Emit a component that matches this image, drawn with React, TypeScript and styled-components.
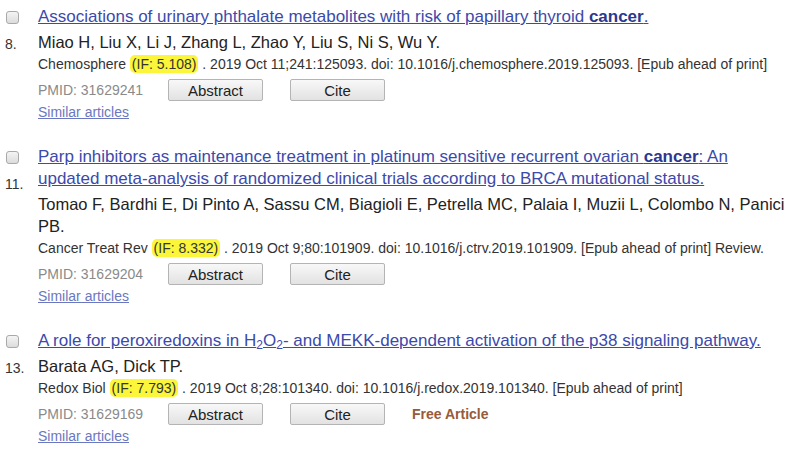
import React from 'react';
import styled, { createGlobalStyle } from 'styled-components';

const GlobalStyle = createGlobalStyle`
  html, body {
    margin: 0;
    padding: 0;
    background: #ffffff;
  }
  body {
    font-family: Arial, "Liberation Sans", sans-serif;
    color: #222;
  }
`;

type Article = {
  num: number;
  title: React.ReactNode;
  authors: React.ReactNode;
  journal: string;
  impact: string;
  citation: string;
  pmid: string;
  free?: boolean;
};

const articles: Article[] = [
  {
    num: 8,
    title: (
      <>
        Associations of urinary phthalate metabolites with risk of papillary thyroid <b>cancer</b>.
      </>
    ),
    authors: 'Miao H, Liu X, Li J, Zhang L, Zhao Y, Liu S, Ni S, Wu Y.',
    journal: 'Chemosphere',
    impact: '(IF: 5.108)',
    citation: ' . 2019 Oct 11;241:125093. doi: 10.1016/j.chemosphere.2019.125093. [Epub ahead of print]',
    pmid: '31629241',
  },
  {
    num: 11,
    title: (
      <>
        Parp inhibitors as maintenance treatment in platinum sensitive recurrent ovarian <b>cancer</b>: An
        updated meta&#8209;analysis of randomized clinical trials according to BRCA mutational status.
      </>
    ),
    authors:
      'Tomao F, Bardhi E, Di Pinto A, Sassu CM, Biagioli E, Petrella MC, Palaia I, Muzii L, Colombo N, Panici PB.',
    journal: 'Cancer Treat Rev',
    impact: '(IF: 8.332)',
    citation: ' . 2019 Oct 9;80:101909. doi: 10.1016/j.ctrv.2019.101909. [Epub ahead of print] Review.',
    pmid: '31629204',
  },
  {
    num: 13,
    title: (
      <>
        A role for peroxiredoxins in H<sub>2</sub>O<sub>2</sub>- and MEKK-dependent activation of the p38
        signaling pathway.
      </>
    ),
    authors: 'Barata AG, Dick TP.',
    journal: 'Redox Biol',
    impact: '(IF: 7.793)',
    citation: ' . 2019 Oct 8;28:101340. doi: 10.1016/j.redox.2019.101340. [Epub ahead of print]',
    pmid: '31629169',
    free: true,
  },
];

const App: React.FC = () => {
  return (
    <>
      <GlobalStyle />
      <StyledList>
        {articles.map((a) => (
          <StyledItem key={a.pmid}>
            <StyledGutter>
              <StyledCheckbox />
              <StyledNumber>{a.num}.</StyledNumber>
            </StyledGutter>
            <StyledBody>
              <StyledTitle href="#">{a.title}</StyledTitle>
              <StyledAuthors>{a.authors}</StyledAuthors>
              <StyledJournal>
                {a.journal} <StyledImpact>{a.impact}</StyledImpact>
                {a.citation}
              </StyledJournal>
              <StyledActions>
                <StyledPmid>PMID: {a.pmid}</StyledPmid>
                <StyledButton>Abstract</StyledButton>
                <StyledButton>Cite</StyledButton>
                {a.free && <StyledFree>Free Article</StyledFree>}
              </StyledActions>
              <StyledSimilar href="#">Similar articles</StyledSimilar>
            </StyledBody>
          </StyledItem>
        ))}
      </StyledList>
    </>
  );
};

const StyledList = styled.div`
  display: flex;
  flex-direction: column;
  gap: 24px;
  padding: 6px 8px 0 5px;
`;

const StyledItem = styled.div`
  display: grid;
  grid-template-columns: 33px 1fr;
`;

const StyledGutter = styled.div`
  display: flex;
  flex-direction: column;
  align-items: flex-start;
`;

const StyledCheckbox = styled.span`
  display: block;
  width: 11px;
  height: 11px;
  margin: 5px 0 9px 1px;
  border: 1px solid #a9a9a9;
  border-radius: 3px;
  background: linear-gradient(#f4f4f4, #dcdcdc);
`;

const StyledNumber = styled.span`
  font-size: 14px;
  line-height: 22px;
  color: #333;
`;

const StyledBody = styled.div`
  display: flex;
  flex-direction: column;
  align-items: flex-start;
`;

const StyledTitle = styled.a`
  font-size: 17px;
  line-height: 22px;
  color: #3b4aab;
  text-decoration: underline;

  b {
    color: #2b388f;
  }

  sub {
    font-size: 12px;
    line-height: 0;
    vertical-align: -3px;
  }
`;

const StyledAuthors = styled.div`
  margin-top: 3px;
  font-size: 16.5px;
  line-height: 22px;
  color: #222;
`;

const StyledJournal = styled.div`
  margin-top: 1px;
  font-size: 14px;
  line-height: 20px;
  color: #333;
`;

const StyledImpact = styled.span`
  background: #fbf63a;
  border-radius: 5px;
  padding: 1px 2px;
`;

const StyledActions = styled.div`
  display: flex;
  align-items: center;
  height: 24px;
  margin-top: 4px;
`;

const StyledPmid = styled.span`
  width: 130px;
  font-size: 14px;
  color: #8a8a8a;
`;

const StyledButton = styled.button`
  width: 95px;
  height: 22px;
  margin-right: 27px;
  padding: 0;
  border: 1px solid #b4b4b4;
  border-radius: 2px;
  background: linear-gradient(#f8f8f8, #e2e2e2);
  font-family: Arial, "Liberation Sans", sans-serif;
  font-size: 15px;
  color: #222;
`;

const StyledFree = styled.span`
  font-size: 14px;
  font-weight: 700;
  color: #985a3a;
`;

const StyledSimilar = styled.a`
  font-size: 14px;
  line-height: 20px;
  color: #6b77bf;
  text-decoration: underline;
`;

export default App;
